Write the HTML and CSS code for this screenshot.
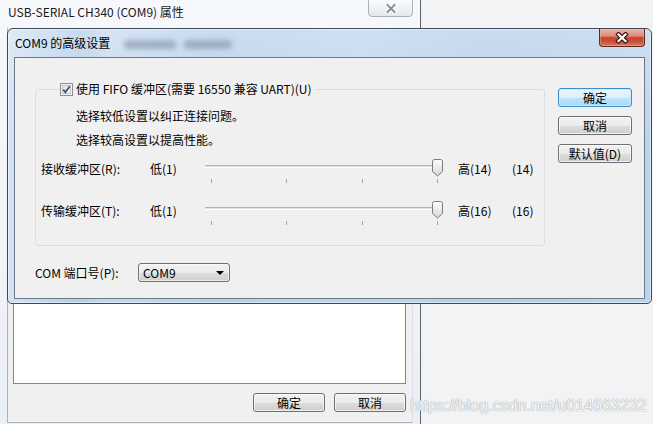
FILE: index.html
```html
<!DOCTYPE html>
<html>
<head>
<meta charset="utf-8">
<link rel="stylesheet" href="styles.css">
</head>
<body>
<div class="desk">
  <div class="bgwin">
    <div class="bg-title">
      <span class="bg-title-text">USB-SERIAL CH340 (COM9) 属性</span>
      <span class="bg-close">
        <svg width="14" height="11" viewBox="0 0 14 11"><path d="M3.5 2 L10.5 9 M10.5 2 L3.5 9" stroke="#ffffff" stroke-width="4" stroke-linecap="square"/><path d="M3.5 2 L10.5 9 M10.5 2 L3.5 9" stroke="#8a9199" stroke-width="2" stroke-linecap="square"/></svg>
      </span>
    </div>
    <div class="bg-client">
      <div class="bg-list"></div>
      <div class="bg-buttons">
        <button class="btn bg-btn">确定</button>
        <button class="btn bg-btn">取消</button>
      </div>
    </div>
  </div>

  <div class="dialog">
    <div class="dlg-title">
      <span class="dlg-title-text">COM9 的高级设置</span>
      <span class="glass-blur"></span>
      <span class="glass-blur second"></span>
      <span class="dlg-close">
        <svg width="16" height="12" viewBox="0 0 16 12"><path d="M4.5 2.5 L11.5 9 M11.5 2.5 L4.5 9" stroke="#3a1a14" stroke-width="4.5" stroke-linecap="square"/><path d="M4.5 2.5 L11.5 9 M11.5 2.5 L4.5 9" stroke="#ffffff" stroke-width="2.2" stroke-linecap="square"/></svg>
      </span>
    </div>
    <div class="dlg-client">
      <div class="main">
        <fieldset class="group">
          <legend class="legend"><span class="legend-inner"><svg class="chk" width="13" height="13" viewBox="0 0 13 13"><defs><linearGradient id="cg" x1="0" y1="0" x2="1" y2="1"><stop offset="0" stop-color="#dcdcdc"/><stop offset="1" stop-color="#ffffff"/></linearGradient></defs><rect x="0.5" y="0.5" width="12" height="12" fill="#f4f4f4" stroke="#8e8f8f"/><rect x="2.5" y="2.5" width="8" height="8" fill="url(#cg)" stroke="#c4c4c4"/><path d="M3.2 6.6 L5.4 9.2 L9.8 3.2" fill="none" stroke="#3d4f8c" stroke-width="1.8"/></svg><span>使用 FIFO 缓冲区(需要 16550 兼容 UART)(U)</span></span></legend>
          <div class="group-body">
            <div class="desc">选择较低设置以纠正连接问题。</div>
            <div class="desc">选择较高设置以提高性能。</div>
            <div class="slider-row first">
              <span>接收缓冲区(R):</span>
              <span>低(1)</span>
              <div class="slider">
                <div class="track"></div>
                <div class="ticks"><i class="tick"></i><i class="tick"></i><i class="tick"></i><i class="tick"></i></div>
                <svg class="thumb" width="11" height="18" viewBox="0 0 11 18"><defs><linearGradient id="tg1" x1="0" y1="0" x2="0" y2="1"><stop offset="0" stop-color="#ffffff"/><stop offset="1" stop-color="#d6d6d6"/></linearGradient></defs><path d="M2.5 0.5 H8.5 Q10.5 0.5 10.5 2.5 V12.5 L5.5 17 L0.5 12.5 V2.5 Q0.5 0.5 2.5 0.5 Z" fill="url(#tg1)" stroke="#7b7b7b"/></svg>
              </div>
              <span>高(14)</span>
              <span>(14)</span>
            </div>
            <div class="slider-row">
              <span>传输缓冲区(T):</span>
              <span>低(1)</span>
              <div class="slider">
                <div class="track"></div>
                <div class="ticks"><i class="tick"></i><i class="tick"></i><i class="tick"></i><i class="tick"></i></div>
                <svg class="thumb" width="11" height="18" viewBox="0 0 11 18"><defs><linearGradient id="tg2" x1="0" y1="0" x2="0" y2="1"><stop offset="0" stop-color="#ffffff"/><stop offset="1" stop-color="#d6d6d6"/></linearGradient></defs><path d="M2.5 0.5 H8.5 Q10.5 0.5 10.5 2.5 V12.5 L5.5 17 L0.5 12.5 V2.5 Q0.5 0.5 2.5 0.5 Z" fill="url(#tg2)" stroke="#7b7b7b"/></svg>
              </div>
              <span>高(16)</span>
              <span>(16)</span>
            </div>
          </div>
        </fieldset>
        <div class="port-row">
          <span class="port-label">COM 端口号(P):</span>
          <div class="combo"><span>COM9</span><i class="arrow"></i></div>
        </div>
      </div>
      <div class="side">
        <button class="btn default">确定</button>
        <button class="btn">取消</button>
        <button class="btn">默认值(D)</button>
      </div>
    </div>
  </div>

  <div class="watermark">https://blog.csdn.net/u014663232</div>
</div>
</body>
</html>
```

FILE: styles.css
```css
* { box-sizing: border-box; }
html, body { margin: 0; padding: 0; }
body {
  width: 653px;
  height: 424px;
  overflow: hidden;
  background: #f2f3f5;
  font-family: "Noto Sans CJK SC", "Noto Sans", sans-serif;
  font-size: 12px;
  color: #000;
}
.desk { position: relative; width: 653px; height: 424px; overflow: hidden; }

/* background properties window */
.bgwin {
  position: absolute;
  left: 0;
  top: 0;
  width: 421px;
  height: 428px;
  background: linear-gradient(180deg, #f6f8fb 0%, #f0f3f7 60%, #eaeff5 100%);
  border-right: 1px solid #5c6168;
  display: flex;
  flex-direction: column;
}
.bg-title {
  height: 28px;
  flex: none;
  display: flex;
  justify-content: space-between;
  align-items: flex-start;
  padding-left: 8px;
}
.bg-title-text { line-height: 24px; color: #1a1a1a; }
.bg-close {
  width: 45px;
  height: 18px;
  margin-top: -1px;
  margin-right: 7px;
  border: 1px solid #a9b2bd;
  border-radius: 0 0 4px 4px;
  background: linear-gradient(180deg, #fbfcfd 0%, #eef1f5 55%, #e3e8ee 100%);
  display: flex;
  align-items: center;
  justify-content: center;
}
.bg-client {
  margin: 0 7px;
  height: 395px;
  flex: none;
  border-left: 1px solid #aab3bd;
  border-right: 1px solid #d9e0e8;
  border-bottom: 1px solid #aab3bd;
  background: #f0f0f0;
  display: flex;
  flex-direction: column;
  padding: 0 6px 0 5px;
}
.bg-list {
  flex: 1;
  background: #fff;
  border: 1px solid #828790;
}
.bg-buttons {
  height: 38px;
  flex: none;
  display: flex;
  justify-content: flex-end;
  gap: 9px;
  padding: 9px 0 10px;
}
.bg-btn { width: 72px; }

/* buttons */
.btn {
  height: 19px;
  padding: 0;
  border: 1px solid #707070;
  border-radius: 3px;
  background: linear-gradient(180deg, #f2f2f2 0%, #ebebeb 50%, #dddddd 51%, #cfcfcf 100%);
  box-shadow: inset 0 0 0 1px rgba(255, 255, 255, 0.65);
  font-family: "Noto Sans CJK SC", "Noto Sans", sans-serif;
  font-size: 12px;
  line-height: 17px;
  color: #000;
}
.btn.default {
  border-color: #3c8fc8;
  background: linear-gradient(180deg, #eaf6fd 0%, #d9f0fc 50%, #bee6fd 51%, #a7d9f5 100%);
  box-shadow: inset 0 0 0 1px rgba(200, 235, 255, 0.9);
}

/* dialog */
.dialog {
  position: absolute;
  left: 7px;
  top: 28px;
  width: 645px;
  height: 276px;
  border: 1px solid #3e4957;
  border-radius: 6px 6px 5px 5px;
  background:
    linear-gradient(180deg, rgba(255, 255, 255, 0.28) 0%, rgba(255, 255, 255, 0) 45%),
    linear-gradient(90deg, #d3e2f2 0%, #c2d7ee 6%, #b5cde9 11%, #c6daef 16%, #b7cfea 32%, #bfd5ed 55%, #b4cde9 75%, #bcd3ec 100%);
  box-shadow: inset 0 0 0 1px rgba(255, 255, 255, 0.45);
  display: flex;
  flex-direction: column;
}
.dlg-title {
  height: 28px;
  flex: none;
  display: flex;
  align-items: flex-start;
  padding-left: 7px;
}
.dlg-title-text { line-height: 28px; color: #000; }
.glass-blur {
  width: 52px;
  height: 9px;
  margin: 11px 0 0 14px;
  border-radius: 4px;
  background: rgba(85, 100, 125, 0.38);
  filter: blur(2.5px);
}
.glass-blur.second { width: 48px; margin-left: 8px; }
.dlg-close {
  margin-left: auto;
  margin-right: 6px;
  width: 46px;
  height: 18px;
  border: 1px solid #5b2a22;
  border-top: none;
  border-radius: 0 0 4px 4px;
  background: linear-gradient(180deg, #eab1a3 0%, #dc8f7c 40%, #c5452d 52%, #c9503a 75%, #dc7a62 100%);
  box-shadow: inset 0 0 0 1px rgba(255, 200, 190, 0.35);
  display: flex;
  align-items: center;
  justify-content: center;
}
.dlg-client {
  margin: 0 6px;
  height: 242px;
  flex: none;
  border: 1px solid #6b7a8b;
  background: #f0f0f0;
  display: flex;
  padding: 24px 0 0 20px;
}
.main { display: flex; flex-direction: column; }

.group {
  width: 510px;
  margin: 0;
  padding: 0 0 1px;
  min-width: 0;
  border: 1px solid #d5dfe5;
  border-radius: 3px;
}
.legend {
  margin-left: 24px;
  padding: 0 3px 0 0;
  height: 14px;
  line-height: 14px;
}
.legend-inner { display: flex; align-items: center; height: 14px; }
.chk { display: block; margin-right: 3px; flex: none; }
.group-body { padding-top: 8px; }
.desc { margin-left: 40px; line-height: 24px; }

.slider-row {
  display: grid;
  grid-template-columns: 109px 55px 253px 54px auto;
  height: 42px;
  padding-left: 5px;
  line-height: 18px;
}
.slider-row.first { margin-top: 8px; }
.slider { position: relative; }
.track {
  width: 236px;
  height: 3px;
  margin-top: 5px;
  border-top: 1px solid #b4b4b4;
  border-bottom: 1px solid #ffffff;
  background: #e2e2e2;
}
.ticks {
  display: flex;
  justify-content: space-between;
  width: 227px;
  margin: 11px 0 0 6px;
}
.tick { display: block; width: 1px; height: 4px; background: #a6a6a6; }
.thumb { position: absolute; left: 227px; top: -1px; }

.port-row {
  display: flex;
  align-items: center;
  height: 19px;
  margin-top: 17px;
}
.port-label { width: 103px; }
.combo {
  width: 92px;
  height: 19px;
  border: 1px solid #707070;
  border-radius: 3px;
  background: linear-gradient(180deg, #f2f2f2 0%, #ebebeb 50%, #dddddd 51%, #cfcfcf 100%);
  box-shadow: inset 0 0 0 1px rgba(255, 255, 255, 0.6);
  display: flex;
  align-items: center;
  justify-content: space-between;
  padding: 0 5px 0 4px;
  line-height: 17px;
}
.arrow {
  display: block;
  width: 0;
  height: 0;
  border-left: 4px solid transparent;
  border-right: 4px solid transparent;
  border-top: 4px solid #000;
}

.side {
  display: flex;
  flex-direction: column;
  gap: 9px;
  width: 74px;
  margin: 6px 0 0 13px;
}

.watermark {
  position: absolute;
  left: 410px;
  top: 397px;
  font-family: "Liberation Sans", Arial, sans-serif;
  font-size: 16px;
  line-height: 18px;
  color: rgba(255, 255, 255, 0.92);
  text-shadow: 0 0 1px #9aa0a6, 0 0 1px #9aa0a6;
  white-space: nowrap;
}
```
